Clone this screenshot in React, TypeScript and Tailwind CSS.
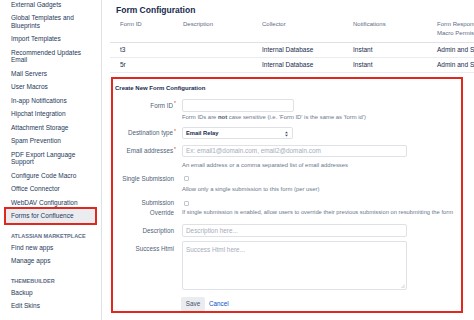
import React from "react"

const navTop = [
  "External Gadgets",
  "Global Templates and Blueprints",
  "Import Templates",
  "Recommended Updates Email",
  "Mail Servers",
  "User Macros",
  "In-app Notifications",
  "Hipchat Integration",
  "Attachment Storage",
  "Spam Prevention",
  "PDF Export Language Support",
  "Configure Code Macro",
  "Office Connector",
  "WebDAV Configuration",
]

const rows = [
  { id: "t3", desc: "", collector: "Internal Database", notif: "Instant", perm: "Admin and Submitter" },
  { id: "5r", desc: "", collector: "Internal Database", notif: "Instant", perm: "Admin and Submitter" },
]

function NavItem({ label, active }: { label: string; active?: boolean }) {
  return (
    <div
      className={`mx-[6px] pl-[5px] pr-[2px] py-[3px] leading-[7.5px] text-[6.5px] text-[#253858] ${
        active ? "bg-[#ebecf0] outline-2 outline-[#e0281f]" : ""
      }`}
    >
      {label}
    </div>
  )
}

function NavHeader({ label }: { label: string }) {
  return (
    <div className="pl-[11px] pt-[10px] pb-[2px] leading-[6px] text-[5.5px] font-bold uppercase text-[#5e6c84]">
      {label}
    </div>
  )
}

function Label({ children, req }: { children: React.ReactNode; req?: boolean }) {
  return (
    <div className={`w-[65px] shrink-0 text-right text-[6.3px] text-[#505f79] ${req ? "pr-[2px]" : "pr-[4px]"}`}>
      {children}
      {req && <sup className="ml-[1px] text-[5px] text-[#de350b]">*</sup>}
    </div>
  )
}

function Box({ w, h, children }: { w: string; h: string; children?: React.ReactNode }) {
  return (
    <div className={`${w} ${h} relative flex items-center rounded-[2px] border border-[#dfe1e6] bg-white px-[3px] text-[6.4px] text-[#a5adba]`}>
      {children}
    </div>
  )
}

function Check() {
  return <div className="ml-[2px] h-[5px] w-[5px] rounded-[1px] border border-[#c1c7d0] bg-white" />
}

export default function App() {
  return (
    <div className="flex h-[320px] w-[474px] overflow-hidden bg-white font-['Liberation_Sans',Arial,sans-serif]">
      <aside className="w-[102px] shrink-0 border-r border-[#dfe1e6]">
        <div className="-mt-[2.5px]">
          {navTop.map(l => (
            <NavItem key={l} label={l} />
          ))}
          <NavItem label="Forms for Confluence" active />
          <NavHeader label="Atlassian Marketplace" />
          <NavItem label="Find new apps" />
          <NavItem label="Manage apps" />
          <NavHeader label="Themebuilder" />
          <NavItem label="Backup" />
          <NavItem label="Edit Skins" />
        </div>
      </aside>

      <main className="min-w-0 flex-1">
        <h1 className="pl-[14px] pt-[5px] text-[8.5px] font-bold leading-[10px] text-[#172b4d]">Form Configuration</h1>

        <div className="ml-[8px] mt-[4.5px] w-[400px]">
          <div className="flex border-b border-[#dfe1e6] pb-[4.5px] pl-[10px] text-[6px] leading-[9px] text-[#5e6c84]">
            <div className="w-[63px] shrink-0">Form ID</div>
            <div className="w-[79px] shrink-0">Description</div>
            <div className="w-[91px] shrink-0">Collector</div>
            <div className="w-[84px] shrink-0">Notifications</div>
            <div className="w-[60px] shrink-0">
              Form Response
              <br />
              Macro Permissions
            </div>
          </div>
          {rows.map(r => (
            <div key={r.id} className="flex h-[15px] items-center border-b border-[#ebecf0] pl-[10px] text-[6.5px] text-[#172b4d]">
              <div className="w-[63px] shrink-0">{r.id}</div>
              <div className="w-[79px] shrink-0">{r.desc}</div>
              <div className="w-[91px] shrink-0">{r.collector}</div>
              <div className="w-[84px] shrink-0">{r.notif}</div>
              <div className="w-[80px] shrink-0 whitespace-nowrap">{r.perm}</div>
            </div>
          ))}
        </div>

        <section className="ml-[9px] mt-[4px] w-[352px] border-2 border-[#e0281f]">
          <h2 className="pl-[2px] pt-[5px] text-[6px] font-bold leading-[8px] text-[#172b4d]">Create New Form Configuration</h2>

          <div className="mt-[7px] flex items-center gap-[4px]">
            <Label req>Form ID</Label>
            <Box w="w-[112px]" h="h-[13px]" />
          </div>
          <p className="ml-[69px] mt-[2px] text-[5.9px] leading-[6px] text-[#6b778c]">
            Form IDs are <b className="text-[#42526e]">not</b> case sensitive (i.e. 'Form ID' is the same as 'form id')
          </p>

          <div className="mt-[7px] flex items-center gap-[4px]">
            <Label req>Destination type</Label>
            <Box w="w-[111px]" h="h-[12px]">
              <span className="text-[5.8px] font-bold text-[#172b4d]">Email Relay</span>
              <svg className="absolute right-[4px] top-[2.5px]" width="3" height="6" viewBox="0 0 3 6">
                <path d="M0 2.3 L1.5 0.5 L3 2.3 Z M0 3.7 L1.5 5.5 L3 3.7 Z" fill="#42526e" />
              </svg>
            </Box>
          </div>

          <div className="mt-[6px] flex items-center gap-[4px]">
            <Label req>Email addresses</Label>
            <Box w="w-[225px]" h="h-[12px]">Ex: email1@domain.com, email2@domain.com</Box>
          </div>
          <p className="ml-[69px] mt-[5px] text-[5.9px] leading-[6px] text-[#6b778c]">
            An email address or a comma separated list of email addresses
          </p>

          <div className="mt-[7px] flex h-[7px] items-center gap-[4px]">
            <Label>Single Submission</Label>
            <Check />
          </div>
          <p className="ml-[69px] mt-[4px] text-[5.9px] leading-[6px] text-[#6b778c]">
            Allow only a single submission to this form (per user)
          </p>

          <div className="mt-[6px] flex gap-[4px]">
            <div className="w-[65px] shrink-0 pr-[4px] text-right text-[6.3px] leading-[10px] text-[#505f79]">
              Submission
              <br />
              Override
            </div>
            <div>
              <div className="flex h-[10px] items-center">
                <Check />
              </div>
              <p className="mt-[1px] whitespace-nowrap text-[5.8px] leading-[6px] text-[#6b778c]">
                If single submission is enabled, allow users to override their previous submission on resubmitting the form
              </p>
            </div>
          </div>

          <div className="mt-[6px] flex items-center gap-[4px]">
            <Label>Description</Label>
            <Box w="w-[225px]" h="h-[13px]">Description here...</Box>
          </div>

          <div className="mt-[4px] flex gap-[4px]">
            <div className="w-[65px] shrink-0 pr-[4px] pt-[4px] text-right text-[6.3px] leading-[7px] text-[#505f79]">
              Success Html
            </div>
            <div className="relative h-[49px] w-[225px] rounded-[2px] border border-[#dfe1e6] bg-white px-[3px] pt-[4px] text-[6.4px] leading-[7px] text-[#a5adba]">
              Success Html here...
              <svg className="absolute bottom-[1px] right-[1px]" width="4" height="4" viewBox="0 0 4 4">
                <path d="M4 0.5 L0.5 4 M4 2.5 L2.5 4" stroke="#a5adba" strokeWidth="0.6" />
              </svg>
            </div>
          </div>

          <div className="ml-[68px] mt-[7px] flex items-center gap-[4px]">
            <button className="h-[14px] w-[24px] rounded-[2px] bg-[#ebecf0] text-[6.3px] text-[#42526e]">Save</button>
            <a className="text-[6.3px] text-[#0052cc]">Cancel</a>
          </div>
        </section>
      </main>
    </div>
  )
}
